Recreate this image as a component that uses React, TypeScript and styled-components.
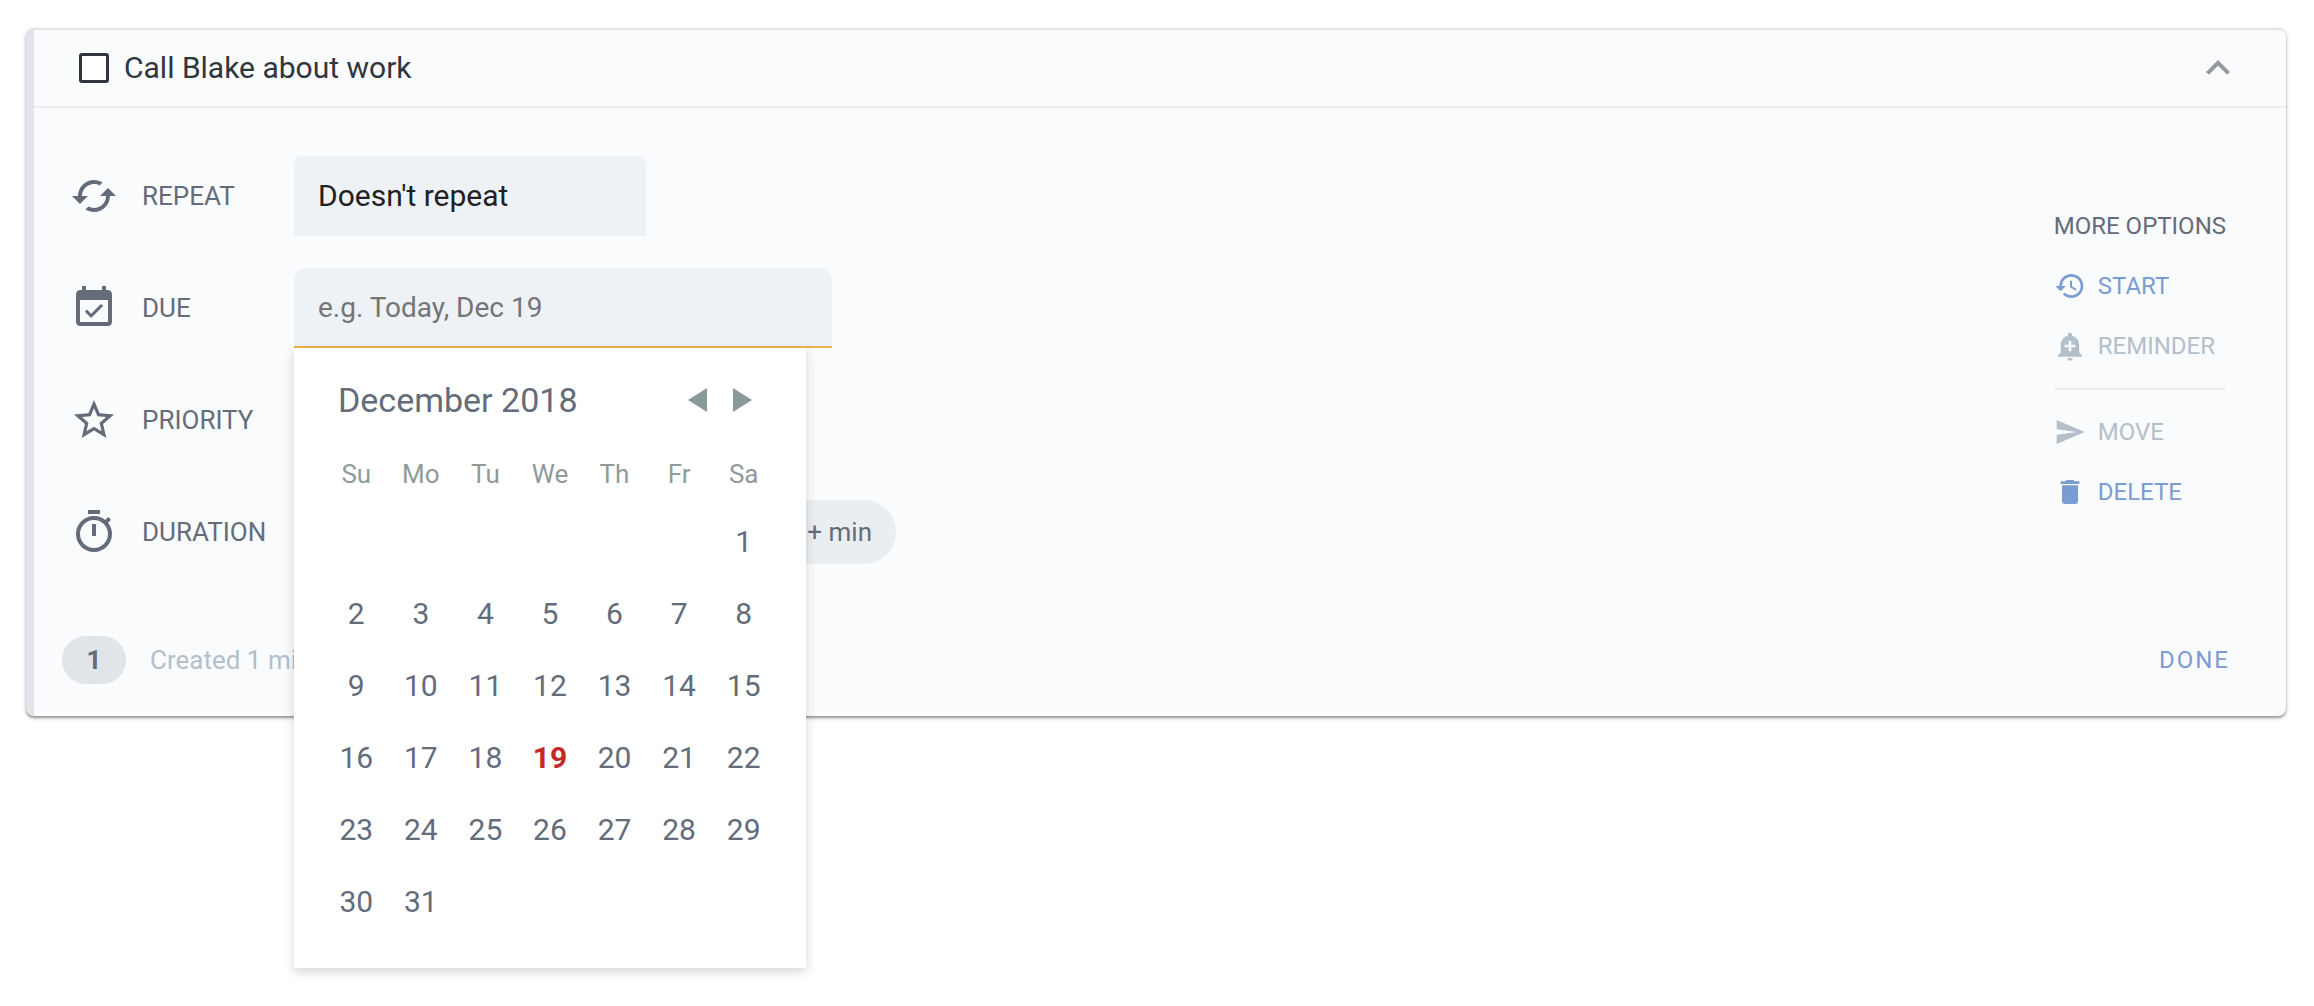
import React, { useState } from 'react';
import styled, { createGlobalStyle, css } from 'styled-components';

const GlobalStyle = createGlobalStyle`
  *, *::before, *::after { box-sizing: border-box; }
  body {
    margin: 0;
    background: #fff;
    color: #646c7a;
    font-family: Roboto, "Liberation Sans", sans-serif;
    font-size: 26px;
    line-height: 32px;
  }
  button, input, select { font: inherit; }
`;

const Page = styled.main`
  min-height: 100vh;
  padding: 28px 28px 28px 26px;
`;

const Card = styled.article`
  border-left: 8px solid #e1e4e9;
  border-top: 2px solid #e1e4e9;
  border-radius: 8px;
  background: #fafbfd;
  box-shadow: 0 2px 4px rgba(0, 0, 0, 0.24), 0 2px 2px rgba(0, 0, 0, 0.24);
`;

const Header = styled.header`
  display: flex;
  align-items: center;
  height: 78px;
  padding: 0 44px 0 45px;
  border-bottom: 2px solid #eceef1;
`;

const TaskLabel = styled.label`
  display: flex;
  flex: 1;
  align-items: center;
  gap: 15px;
  color: #2f3640;
  font-size: 30px;
`;

const Checkbox = styled.input`
  appearance: none;
  width: 30px;
  height: 30px;
  margin: 0;
  border: 3px solid #2f3640;
  border-radius: 3px;
  background: #fff;
  &:checked { background: #2f3640; }
`;

const PlainButton = styled.button`
  display: flex;
  align-items: center;
  padding: 0;
  border: 0;
  background: none;
  color: inherit;
  cursor: pointer;
`;

const CollapseButton = styled(PlainButton)`
  color: #95999e;
`;

const Body = styled.div`
  display: flex;
  justify-content: space-between;
  padding: 48px 60px 0 36px;
`;

const Fields = styled.div`
  display: flex;
  flex-direction: column;
  gap: 32px;
`;

const Field = styled.div`
  display: grid;
  grid-template-columns: 48px 128px auto;
  column-gap: 24px;
  align-items: center;
  justify-content: start;
  height: 80px;
`;

const inputBox = css`
  display: block;
  height: 80px;
  padding: 0 24px;
  border: 0;
  outline: 0;
  background: #eef1f6;
  color: #212121;
`;

const RepeatSelect = styled.select`
  ${inputBox}
  appearance: none;
  width: 352px;
  border-radius: 8px 8px 0 0;
  font-size: 30px;
`;

const DueInput = styled.input`
  ${inputBox}
  width: 538px;
  border-bottom: 2px solid #f0b14a;
  border-radius: 12px 12px 0 0;
  font-size: 28px;
  &::placeholder { color: #757575; opacity: 1; }
`;

const FieldControl = styled.div`
  position: relative;
`;

const DurationOptions = styled.div`
  display: flex;
  justify-content: flex-end;
  width: 602px;
`;

const Pill = styled.button`
  height: 64px;
  padding: 0 24px;
  border: 0;
  border-radius: 32px;
  background: #ebeef1;
  color: #646c7a;
  cursor: pointer;
`;

const Popup = styled.section`
  position: absolute;
  top: 100%;
  left: 0;
  z-index: 2;
  width: 512px;
  padding: 24px 30px 30px;
  background: #fff;
  box-shadow: 0 4px 10px rgba(0, 0, 0, 0.16);
`;

const PopupHeader = styled.div`
  display: flex;
  align-items: center;
  justify-content: space-between;
  height: 56px;
  padding: 0 24px 0 14px;
`;

const MonthTitle = styled.h2`
  margin: 0;
  font-size: 34px;
  font-weight: 400;
  line-height: 40px;
`;

const MonthNav = styled.div`
  display: flex;
  gap: 26px;
  color: #8c9998;
`;

const Days = styled.table`
  width: 100%;
  table-layout: fixed;
  border-collapse: collapse;
  text-align: center;
`;

const Weekday = styled.th`
  height: 78px;
  padding: 28px 0 0;
  color: #8f9b9a;
  font-weight: 400;
  vertical-align: top;
  line-height: 36px;
`;

const DayCell = styled.td`
  height: 72px;
  padding: 0;
`;

const DayButton = styled(PlainButton)<{ $today: boolean }>`
  justify-content: center;
  width: 100%;
  height: 72px;
  color: ${(p) => (p.$today ? '#c62828' : '#646c7a')};
  font-size: 30px;
  font-weight: ${(p) => (p.$today ? 700 : 400)};
`;

const Options = styled.aside`
  display: flex;
  flex-direction: column;
  gap: 20px;
  margin-top: 50px;
  font-size: 24px;
`;

const OptionsTitle = styled.h3`
  margin: 0;
  font-size: 24px;
  font-weight: 400;
  line-height: 40px;
`;

const OptionButton = styled(PlainButton)<{ $active?: boolean }>`
  gap: 12px;
  height: 40px;
  color: ${(p) => (p.$active ? '#7b9cd1' : '#b3bfcb')};
`;

const Divider = styled.hr`
  width: 100%;
  height: 2px;
  margin: 2px 0;
  border: 0;
  background: #ebedf0;
`;

const Footer = styled.footer`
  display: flex;
  align-items: center;
  padding: 64px 56px 32px 28px;
`;

const Badge = styled.span`
  width: 64px;
  height: 48px;
  border-radius: 24px;
  background: #e1e4e9;
  font-weight: 700;
  line-height: 48px;
  text-align: center;
`;

const Created = styled.span`
  flex: 1;
  margin-left: 24px;
  color: #b3bfcb;
`;

const DoneButton = styled(PlainButton)`
  color: #7b9cd1;
  font-size: 24px;
  letter-spacing: 2px;
`;

const icons = {
  less: 'M12 8l-6 6 1.41 1.41L12 10.83l4.59 4.58L18 14z',
  cached:
    'M19 8l-4 4h3c0 3.31-2.69 6-6 6-1.01 0-1.97-.25-2.8-.7l-1.46 1.46C8.97 19.54 10.43 20 12 20c4.42 0 8-3.58 8-8h3l-4-4zM6 12c0-3.31 2.69-6 6-6 1.01 0 1.97.25 2.8.7l1.46-1.46C15.03 4.46 13.57 4 12 4c-4.42 0-8 3.58-8 8H1l4 4 4-4H6z',
  event:
    'M16.53 11.06L15.47 10l-4.88 4.88-2.12-2.12-1.06 1.06L10.59 17l5.94-5.94zM19 3h-1V1h-2v2H8V1H6v2H5c-1.11 0-1.99.9-1.99 2L3 19c0 1.1.89 2 2 2h14c1.1 0 2-.9 2-2V5c0-1.1-.9-2-2-2zm0 16H5V8h14v11z',
  star:
    'M22 9.24l-7.19-.62L12 2 9.19 8.63 2 9.24l5.46 4.73L5.82 21 12 17.27 18.18 21l-1.63-7.03L22 9.24zM12 15.4l-3.76 2.27 1-4.28-3.32-2.88 4.38-.38L12 6.1l1.71 4.04 4.38.38-3.32 2.88 1 4.28L12 15.4z',
  timer:
    'M15 1H9v2h6V1zm-4 13h2V8h-2v6zm8.03-6.61l1.42-1.42c-.43-.51-.9-.99-1.41-1.41l-1.42 1.42C16.07 4.74 14.12 4 12 4c-4.97 0-9 4.03-9 9s4.02 9 9 9 9-4.03 9-9c0-2.12-.74-4.07-1.97-5.61zM12 20c-3.87 0-7-3.13-7-7s3.13-7 7-7 7 3.13 7 7-3.13 7-7 7z',
  history:
    'M13 3c-4.97 0-9 4.03-9 9H1l3.89 3.89.07.14L9 12H6c0-3.87 3.13-7 7-7s7 3.13 7 7-3.13 7-7 7c-1.93 0-3.68-.79-4.94-2.06l-1.42 1.42C8.27 19.99 10.51 21 13 21c4.97 0 9-4.03 9-9s-4.03-9-9-9zm-1 5v5l4.28 2.54.72-1.21-3.5-2.08V8H12z',
  alert:
    'M10.01 21.01c0 1.1.89 1.99 1.99 1.99s1.99-.89 1.99-1.99h-3.98zm8.87-4.19V11c0-3.25-2.25-5.97-5.29-6.69v-.72C13.59 2.71 12.88 2 12 2s-1.59.71-1.59 1.59v.72C7.37 5.03 5.12 7.75 5.12 11v5.82L3 18.94V20h18v-1.06l-2.12-2.12zM16 13.01h-3v3h-2v-3H8V11h3V8h2v3h3v2.01z',
  send: 'M2.01 21L23 12 2.01 3 2 10l15 2-15 2z',
  trash: 'M6 19c0 1.1.9 2 2 2h8c1.1 0 2-.9 2-2V7H6v12zM19 4h-3.5l-1-1h-5l-1 1H5v2h14V4z',
};

function Icon({ name, size = 48 }: { name: keyof typeof icons; size?: number }) {
  return (
    <svg width={size} height={size} viewBox="0 0 24 24" fill="currentColor" aria-hidden="true">
      <path d={icons[name]} />
    </svg>
  );
}

const weekdays = ['Su', 'Mo', 'Tu', 'We', 'Th', 'Fr', 'Sa'];
const firstWeekday = 6;
const daysInMonth = 31;
const today = 19;

const weeks = Array.from({ length: 6 }, (_, w) =>
  Array.from({ length: 7 }, (_, d) => {
    const day = w * 7 + d - firstWeekday + 1;
    return day >= 1 && day <= daysInMonth ? day : null;
  }),
);

function Calendar({ onPick }: { onPick: (day: number) => void }) {
  return (
    <Popup aria-label="Choose a date">
      <PopupHeader>
        <MonthTitle>December 2018</MonthTitle>
        <MonthNav>
          <PlainButton type="button" aria-label="Previous month">
            <svg width="19" height="24" viewBox="0 0 19 24" fill="currentColor"><path d="M19 0v24L0 12z" /></svg>
          </PlainButton>
          <PlainButton type="button" aria-label="Next month">
            <svg width="19" height="24" viewBox="0 0 19 24" fill="currentColor"><path d="M0 0v24l19-12z" /></svg>
          </PlainButton>
        </MonthNav>
      </PopupHeader>
      <Days>
        <thead>
          <tr>{weekdays.map((d) => <Weekday key={d} scope="col">{d}</Weekday>)}</tr>
        </thead>
        <tbody>
          {weeks.map((week, i) => (
            <tr key={i}>
              {week.map((day, j) => (
                <DayCell key={j}>
                  {day && (
                    <DayButton type="button" $today={day === today} onClick={() => onPick(day)}>{day}</DayButton>
                  )}
                </DayCell>
              ))}
            </tr>
          ))}
        </tbody>
      </Days>
    </Popup>
  );
}

export default function App() {
  const [due, setDue] = useState('');
  return (
    <>
      <GlobalStyle />
      <Page>
        <Card>
          <Header>
            <TaskLabel>
              <Checkbox type="checkbox" />
              Call Blake about work
            </TaskLabel>
            <CollapseButton type="button" aria-label="Collapse"><Icon name="less" /></CollapseButton>
          </Header>
          <Body>
            <Fields>
              <Field>
                <Icon name="cached" />
                <label htmlFor="repeat">REPEAT</label>
                <RepeatSelect id="repeat"><option>Doesn't repeat</option></RepeatSelect>
              </Field>
              <Field>
                <Icon name="event" />
                <label htmlFor="due">DUE</label>
                <FieldControl>
                  <DueInput id="due" placeholder="e.g. Today, Dec 19" value={due} onChange={(e) => setDue(e.target.value)} />
                  <Calendar onPick={(day) => setDue(`Dec ${day}`)} />
                </FieldControl>
              </Field>
              <Field>
                <Icon name="star" />
                <span>PRIORITY</span>
              </Field>
              <Field>
                <Icon name="timer" />
                <span>DURATION</span>
                <DurationOptions><Pill type="button">+ min</Pill></DurationOptions>
              </Field>
            </Fields>
            <Options>
              <OptionsTitle>MORE OPTIONS</OptionsTitle>
              <OptionButton type="button" $active><Icon name="history" size={32} />START</OptionButton>
              <OptionButton type="button"><Icon name="alert" size={32} />REMINDER</OptionButton>
              <Divider />
              <OptionButton type="button"><Icon name="send" size={32} />MOVE</OptionButton>
              <OptionButton type="button" $active><Icon name="trash" size={32} />DELETE</OptionButton>
            </Options>
          </Body>
          <Footer>
            <Badge>1</Badge>
            <Created>Created 1 min</Created>
            <DoneButton type="button">DONE</DoneButton>
          </Footer>
        </Card>
      </Page>
    </>
  );
}
